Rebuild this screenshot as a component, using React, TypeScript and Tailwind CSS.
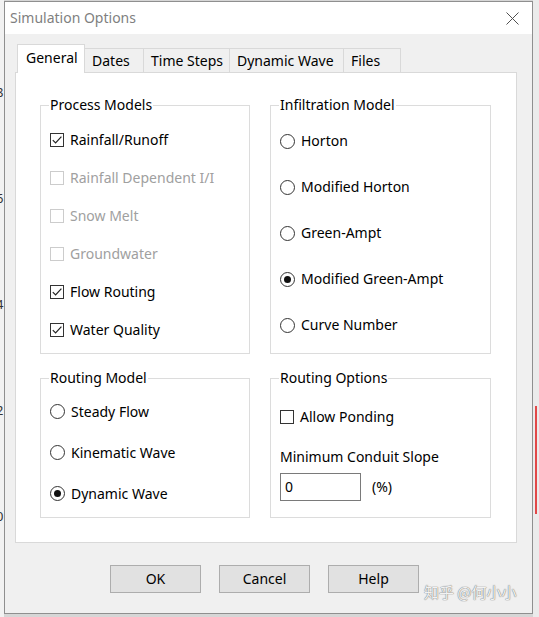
import clsx from "clsx";

type ItemProps = { label: string; checked?: boolean; disabled?: boolean };

function CheckBox({ label, checked = false, disabled = false }: ItemProps) {
  return (
    <div className={clsx("flex items-center gap-[6px]", disabled ? "text-[#a0a0a0]" : "text-black")}>
      <span
        className={clsx(
          "flex h-[14px] w-[14px] shrink-0 items-center justify-center border bg-white",
          disabled ? "border-[#cccccc]" : "border-[#333333]"
        )}
      >
        {checked && (
          <svg viewBox="0 0 12 12" className="h-[12px] w-[12px]">
            <path d="M1.8 6.2 L4.6 9 L10.4 2.6" fill="none" stroke="#222" strokeWidth="1.2" />
          </svg>
        )}
      </span>
      <span>{label}</span>
    </div>
  );
}

function Radio({ label, checked = false }: ItemProps) {
  return (
    <div className="flex items-center gap-[6px]">
      <span className="flex h-[15px] w-[15px] shrink-0 items-center justify-center rounded-full border border-[#333333] bg-white">
        {checked && <span className="h-[7px] w-[7px] rounded-full bg-[#111]" />}
      </span>
      <span>{label}</span>
    </div>
  );
}

function Group({ title, className, children }: { title: string; className?: string; children: React.ReactNode }) {
  return (
    <fieldset className={clsx("flex flex-col border border-[#dcdcdc] pl-[9px]", className)}>
      <legend className="-ml-px px-px leading-[20px]">{title}</legend>
      {children}
    </fieldset>
  );
}

const tabs = [
  { name: "Dates", w: "w-[59px]" },
  { name: "Time Steps", w: "w-[86px]" },
  { name: "Dynamic Wave", w: "w-[114px]" },
  { name: "Files", w: "w-[57px]" },
];

export default function App() {
  return (
    <div className="relative flex h-[617px] w-[539px] overflow-hidden bg-[#d6d6d6] font-['Noto_Sans',sans-serif] text-[14px] leading-[20px] text-black">
      {/* plot axis of the window behind */}
      <div className="flex w-[4px] shrink-0 flex-col overflow-hidden bg-[#f2f2f2] pt-[82px]">
        {["8", "6", "4", "2", "0"].map((d) => (
          <span key={d} className="-ml-[4px] h-[106px] text-[13px] text-[#333]">
            {d}
          </span>
        ))}
      </div>

      <div className="mt-px flex h-[613px] w-[529px] shrink-0 flex-col border border-[#8f8f8f] bg-[#f0f0f0]">
        {/* title bar */}
        <div className="flex h-[32px] items-center justify-between bg-white pl-[5px] pr-[13px]">
          <span className="text-[14px] text-[#7f7f7f]">Simulation Options</span>
          <svg viewBox="0 0 13 13" className="h-[13px] w-[13px]">
            <path d="M0.5 0.5 L12.5 12.5 M12.5 0.5 L0.5 12.5" stroke="#505050" strokeWidth="1" />
          </svg>
        </div>

        <div className="flex flex-col pl-[10px] pt-[10px]">
          {/* tab strip */}
          <div className="flex h-[28px] items-end pl-[2px]">
            <div className="relative z-10 -mb-px flex h-[29px] w-[68px] border border-b-0 border-[#d9d9d9] bg-white pl-[8px] pt-[3px]">
              General
            </div>
            {tabs.map((t) => (
              <div
                key={t.name}
                className={clsx(
                  "flex h-[24px] items-center border-t border-r border-[#d9d9d9] bg-[#f0f0f0] pl-[7px]",
                  t.w
                )}
              >
                {t.name}
              </div>
            ))}
          </div>

          {/* General page */}
          <div className="flex h-[471px] w-[502px] flex-col border border-[#d9d9d9] bg-white pl-[24px] pt-[22px]">
            <div className="flex gap-[20px]">
              <Group title="Process Models" className="w-[210px] pb-[4px] pt-[6px]">
                <div className="flex h-[38px] items-center">
                  <CheckBox label="Rainfall/Runoff" checked />
                </div>
                <div className="flex h-[38px] items-center">
                  <CheckBox label="Rainfall Dependent I/I" disabled />
                </div>
                <div className="flex h-[38px] items-center">
                  <CheckBox label="Snow Melt" disabled />
                </div>
                <div className="flex h-[38px] items-center">
                  <CheckBox label="Groundwater" disabled />
                </div>
                <div className="flex h-[38px] items-center">
                  <CheckBox label="Flow Routing" checked />
                </div>
                <div className="flex h-[38px] items-center">
                  <CheckBox label="Water Quality" checked />
                </div>
              </Group>

              <Group title="Infiltration Model" className="w-[221px] pb-[5px] pt-[3px]">
                {["Horton", "Modified Horton", "Green-Ampt", "Modified Green-Ampt", "Curve Number"].map((m) => (
                  <div key={m} className="flex h-[46px] items-center">
                    <Radio label={m} checked={m === "Modified Green-Ampt"} />
                  </div>
                ))}
              </Group>
            </div>

            <div className="mt-[14px] flex gap-[20px]">
              <Group title="Routing Model" className="w-[210px] pb-[3px] pt-[3px]">
                {["Steady Flow", "Kinematic Wave", "Dynamic Wave"].map((m) => (
                  <div key={m} className="flex h-[41px] items-center">
                    <Radio label={m} checked={m === "Dynamic Wave"} />
                  </div>
                ))}
              </Group>

              <Group title="Routing Options" className="w-[221px] pt-[19px]">
                <div className="flex h-[20px] items-center">
                  <CheckBox label="Allow Ponding" />
                </div>
                <div className="mt-[20px]">Minimum Conduit Slope</div>
                <div className="mt-[6px] flex items-center">
                  <div className="flex h-[28px] w-[81px] items-center border border-[#7a7a7a] bg-white px-[4px]">0</div>
                  <span className="ml-[11px]">(%)</span>
                </div>
              </Group>
            </div>
          </div>

          {/* dialog buttons */}
          <div className="ml-[95px] mt-[22px] flex gap-[18px]">
            {["OK", "Cancel", "Help"].map((b) => (
              <button
                key={b}
                className="flex h-[28px] w-[91px] items-center justify-center border border-[#adadad] bg-[#e1e1e1]"
              >
                {b}
              </button>
            ))}
          </div>
        </div>
      </div>

      <div className="flex w-[6px] shrink-0 flex-col bg-[#ebebeb] pt-[406px]">
        <div className="ml-[2px] h-[108px] w-[2px] bg-[#e24848]" />
      </div>

      <span className="absolute left-[424px] top-[582px] font-['Noto_Sans_CJK_SC',sans-serif] text-[15px] text-[#f2f2f2] [text-shadow:0_0_1px_#777,0_0_1px_#777]">
        知乎 @何小小
      </span>
    </div>
  );
}
